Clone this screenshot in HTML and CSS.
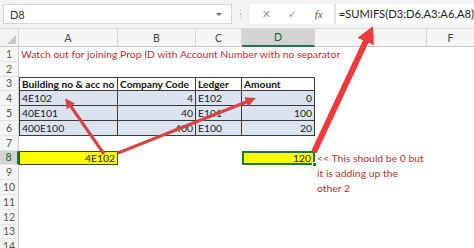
FILE: index.html
```html
<!DOCTYPE html>
<html>
<head>
<meta charset="utf-8">
<link rel="stylesheet" href="styles.css">
</head>
<body>
<div class="app">
  <div class="fbar">
    <div class="namebox"><span>D8</span><span class="dd"></span></div>
    <div class="dots"><i></i><i></i><i></i></div>
    <div class="icons">
      <span class="ico x">✕</span>
      <span class="ico ok">✓</span>
      <span class="ico fx">fx</span>
    </div>
    <div class="finput">=SUMIFS(D3:D6,A3:A6,A8)</div>
  </div>
  <div class="sheet">
    <div class="corner"><span class="tri"></span></div>
    <div class="ch">A</div><div class="ch">B</div><div class="ch">C</div><div class="ch sel">D</div><div class="ch">E</div><div class="ch last">F</div>

    <div class="rh">1</div><div class="c note span6">Watch out for joining Prop ID with Account Number with no separator</div>
    <div class="rh">2</div><div class="c span6"></div>

    <div class="rh">3</div>
    <div class="c t tl tt b">Building no &amp; acc no</div>
    <div class="c t tt b">Company Code</div>
    <div class="c t tt b">Ledger</div>
    <div class="c t tt b">Amount</div>
    <div class="c span2"></div>

    <div class="rh">4</div>
    <div class="c t tl f">4E102</div>
    <div class="c t f r">4</div>
    <div class="c t f">E102</div>
    <div class="c t f r">0</div>
    <div class="c span2"></div>

    <div class="rh">5</div>
    <div class="c t tl f">40E101</div>
    <div class="c t f r">40</div>
    <div class="c t f">E101</div>
    <div class="c t f r">100</div>
    <div class="c span2"></div>

    <div class="rh">6</div>
    <div class="c t tl f">400E100</div>
    <div class="c t f r">400</div>
    <div class="c t f">E100</div>
    <div class="c t f r">20</div>
    <div class="c span2"></div>

    <div class="rh">7</div><div class="c span6"></div>

    <div class="rh sel">8</div>
    <div class="c yel r">4E102</div>
    <div class="c span2"></div>
    <div class="c yel r active">120<span class="handle"></span></div>
    <div class="c note">&lt;&lt; This should be 0 but</div>
    <div class="c"></div>

    <div class="rh">9</div><div class="c span4"></div><div class="c note">it is adding up the</div><div class="c"></div>
    <div class="rh">10</div><div class="c span4"></div><div class="c note">other 2</div><div class="c"></div>
    <div class="rh">11</div><div class="c span6"></div>
    <div class="rh">12</div><div class="c span6"></div>
    <div class="rh">13</div><div class="c span6"></div>
    <div class="rh">14</div><div class="c span6"></div>
  </div>

  <svg class="arrows" width="474" height="248" viewBox="0 0 474 248">
    <path class="ar thin" transform="translate(104 154) rotate(-124.85)" d="M0,-1.6 L58,-1.6 L58,-5 L68,0 L58,5 L58,1.6 L0,1.6 Z"/>
    <path class="ar thin" transform="translate(118 153) rotate(-21.7)" d="M0,-1.6 L138,-1.6 L138,-5 L148.6,0 L138,5 L138,1.6 L0,1.6 Z"/>
    <path class="ar big" transform="translate(314 152) rotate(-64.9)" d="M0,-3 L122,-3 L122,-9 L139,0 L122,9 L122,3 L0,3 Z"/>
  </svg>
</div>
</body>
</html>
```

FILE: styles.css
```css
* { box-sizing: border-box; }
html, body { margin: 0; padding: 0; background: #fff; }
body { width: 474px; height: 248px; overflow: hidden; font-family: "Lato", "Liberation Sans", sans-serif; }

.app { position: relative; width: 474px; height: 248px; overflow: hidden; }

.fbar {
  height: 29px;
  background: #f3f3f3;
  display: flex;
  align-items: flex-start;
  padding-top: 4px;
  padding-left: 3px;
  border-bottom: 1px solid #dadada;
}
.namebox {
  width: 229px; height: 20px;
  background: #fff;
  border: 1px solid #d6d6d6;
  display: flex; align-items: center; justify-content: space-between;
  padding: 0 9px 0 6px;
  font-size: 11px; color: #333;
}
.dd { width: 0; height: 0; border-left: 3px solid transparent; border-right: 3px solid transparent; border-top: 3px solid #777; }
.dots { width: 18px; height: 20px; display: flex; flex-direction: column; align-items: center; justify-content: center; gap: 2px; }
.dots i { width: 1.5px; height: 1.5px; background: #b5b5b5; display: block; }
.icons {
  width: 83px; height: 20px; background: #fff;
  display: flex; align-items: center; padding-left: 12px; gap: 0;
}
.ico { color: #9a9a9a; font-size: 11px; font-family: "DejaVu Sans", sans-serif; }
.ico.x { width: 26px; }
.ico.ok { width: 27px; }
.ico.fx { font-family: "Liberation Serif", serif; font-style: italic; color: #555; font-size: 11px; }
.finput {
  flex: 1; height: 20px; background: #fff;
  margin-left: 2px;
  border-left: 1px solid #dcdcdc;
  padding-left: 3px;
  font-size: 11.2px; line-height: 20px; color: #222;
  white-space: nowrap;
}

.sheet {
  display: grid;
  grid-template-columns: 19px 99px 78px 46px 73px 112px 47px;
  grid-template-rows: 18px repeat(14, 14.8px);
  font-size: 10.4px;
  color: #222;
}
.corner { background: #f3f3f3; border-right: 1px solid #d6d6d6; border-bottom: 1px solid #c9c9c9; position: relative; }
.tri { position: absolute; right: 2px; bottom: 2px; width: 0; height: 0; border-left: 9px solid transparent; border-bottom: 9px solid #c8c8c8; }
.ch {
  background: #f5f5f5; color: #444;
  border-right: 1px solid #d6d6d6; border-bottom: 1px solid #c9c9c9;
  display: flex; align-items: center; justify-content: center;
  font-size: 10.5px;
}
.ch.sel { background: #d3d3d3; border-bottom: 2px solid #217346; color: #1f5e37; }
.ch.last { border-right: none; }
.rh {
  background: #f5f5f5; color: #555;
  border-right: 1px solid #d0d0d0; border-bottom: 1px solid #e4e4e4;
  display: flex; align-items: center; justify-content: center;
  font-size: 10.5px;
}
.rh.sel { background: #d3d3d3; border-right: 2px solid #217346; color: #1f5e37; }

.c { white-space: nowrap; padding: 0 2px; display: flex; align-items: center; min-width: 0; }
.span2 { grid-column: span 2; }
.span4 { grid-column: span 4; }
.span6 { grid-column: span 6; }
.note { color: #b33333; overflow: visible; }
.t { border-right: 1px solid #3a3a3a; border-bottom: 1px solid #3a3a3a; }
.tl { border-left: 1px solid #3a3a3a; }
.tt { border-top: 1px solid #3a3a3a; }
.b { font-weight: bold; color: #111; font-size: 10.2px; }
.f { background: #dbe3f1; }
.r { justify-content: flex-end; }
.yel { background: #ffff00; border: 1px solid #444; color: #222; }
.active { border: 2px solid #217346; position: relative; padding-right: 2px; }
.handle { position: absolute; right: -4px; bottom: -4px; width: 5px; height: 5px; background: #217346; border: 1px solid #fff; }

.arrows { position: absolute; left: 0; top: 0; pointer-events: none; }
.ar.thin { fill: #d64545; }
.ar.big { fill: #ee3a3a; }
```
